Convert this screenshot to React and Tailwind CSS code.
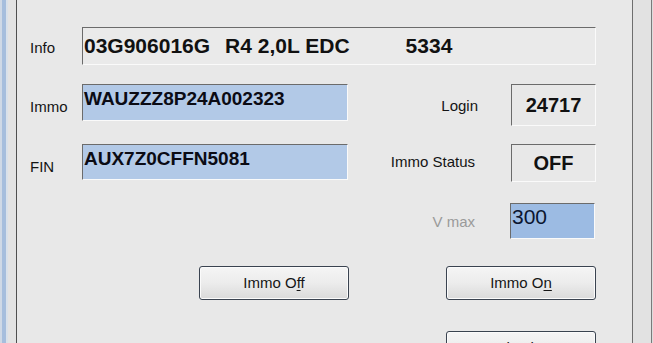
import React from 'react';

const sunken = 'border border-t-[#6b6b6b] border-l-[#6b6b6b] border-r-[#fafafa] border-b-[#fafafa]';

function Label({ children, className = '', color = 'text-[#141414]' }) {
    return <div className={`text-[15px] leading-[18px] ${color} ${className}`}>{children}</div>;
}

function WinButton({ children, className = '' }) {
    return (
        <button
            className={`flex h-[34px] w-[150px] items-center justify-center rounded-[3px] border border-[#3a4350] bg-linear-to-b from-[#f5f5f5] via-[#ececec] to-[#dadada] text-[15px] leading-[18px] text-[#151515] shadow-[inset_0_0_0_1px_#fbfbfb] ${className}`}
        >
            {children}
        </button>
    );
}

export default function App() {
    return (
        <div className="flex h-[343px] w-[653px] overflow-hidden bg-[#e8e8e8] font-['Liberation_Sans',Arial,sans-serif]">
            {/* window frame, left */}
            <div className="flex h-full">
                <div className="w-[2px] bg-[#cfd9e6]" />
                <div className="w-[4px] bg-[#a6bedd]" />
                <div className="w-[2px] bg-[#d9e1ea]" />
                <div className="w-[8px] bg-[#e3e3e3]" />
                <div className="w-[1px] bg-[#4f4f4f]" />
            </div>

            {/* form panel */}
            <div className="flex w-[615px] flex-col pl-[13px]">
                {/* Info */}
                <div className="mt-[27px] flex items-start">
                    <Label className="mt-[12px] w-[52px]">Info</Label>
                    <div className={`h-[38px] w-[514px] bg-[#eaeaea] pl-[1px] pt-[6px] ${sunken}`}>
                        <div className="flex text-[21px] font-bold leading-[24px] text-[#111]">
                            <span>03G906016G</span>
                            <span className="ml-[15px]">R4 2,0L EDC</span>
                            <span className="ml-[56px]">5334</span>
                        </div>
                    </div>
                </div>

                {/* Immo / Login */}
                <div className="mt-[19px] flex items-start">
                    <Label className="mt-[14px] w-[52px]">Immo</Label>
                    <div className={`h-[37px] w-[266px] bg-[#b2c9e7] pl-[1px] pt-[3px] text-[19px] font-bold leading-[22px] text-[#0b0b14] ${sunken}`}>
                        WAUZZZ8P24A002323
                    </div>
                    <div className="flex w-[163px] justify-end pr-[33px]">
                        <Label className="mt-[13px]">Login</Label>
                    </div>
                    <div className={`flex h-[42px] w-[85px] items-center justify-center text-[20px] font-bold leading-[24px] text-[#111] ${sunken}`}>
                        24717
                    </div>
                </div>

                {/* FIN / Immo Status */}
                <div className="mt-[18px] flex items-start">
                    <Label className="mt-[14px] w-[52px]">FIN</Label>
                    <div className={`h-[36px] w-[266px] bg-[#b2c9e7] pl-[1px] pt-[3px] text-[19px] font-bold leading-[22px] text-[#0b0b14] ${sunken}`}>
                        AUX7Z0CFFN5081
                    </div>
                    <div className="flex w-[163px] justify-end pr-[36px]">
                        <Label className="mt-[9px]">Immo Status</Label>
                    </div>
                    <div className={`flex h-[38px] w-[85px] items-center justify-center text-[20px] font-bold leading-[24px] text-[#111] ${sunken}`}>
                        OFF
                    </div>
                </div>

                {/* V max */}
                <div className="mt-[21px] flex items-start">
                    <div className="flex w-[480px] justify-end pr-[35px]">
                        <Label className="mt-[10px]" color="text-[#9a9a9a]">V max</Label>
                    </div>
                    <div className={`h-[36px] w-[85px] bg-[#9cbbe3] pl-[1px] pt-[1px] text-[21px] leading-[24px] text-[#0b1630] ${sunken}`}>
                        300
                    </div>
                </div>

                {/* buttons */}
                <div className="mt-[27px] flex">
                    <WinButton className="ml-[169px]">
                        <span>
                            Immo O<span className="underline underline-offset-2">f</span>f
                        </span>
                    </WinButton>
                    <WinButton className="ml-[97px]">
                        <span>
                            Immo O<span className="underline underline-offset-2">n</span>
                        </span>
                    </WinButton>
                </div>
                <div className="mt-[31px] flex">
                    <WinButton className="ml-[416px] shrink-0">Set Check Sum</WinButton>
                </div>
            </div>

            {/* window frame, right */}
            <div className="flex h-full">
                <div className="w-[1px] bg-[#6e6e6e]" />
                <div className="w-[18px] bg-[#e2e2e2]" />
                <div className="w-[1px] bg-[#7a7a7a]" />
                <div className="w-[1px] bg-[#dcdcdc]" />
            </div>
        </div>
    );
}
